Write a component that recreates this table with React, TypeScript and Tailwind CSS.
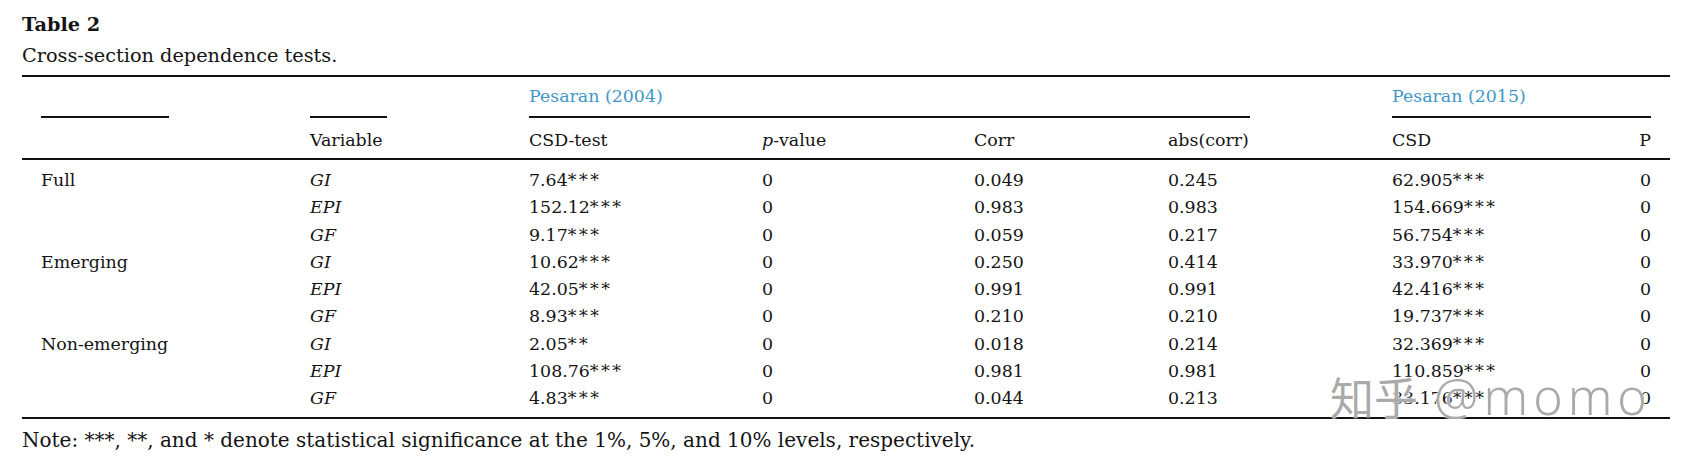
import React from "react";

type Row = { group?: string; v: string; csd: string; p: string; corr: string; abs: string; csd2: string; p2: string };

const rows: Row[] = [
  { group: "Full", v: "GI", csd: "7.64***", p: "0", corr: "0.049", abs: "0.245", csd2: "62.905***", p2: "0" },
  { v: "EPI", csd: "152.12***", p: "0", corr: "0.983", abs: "0.983", csd2: "154.669***", p2: "0" },
  { v: "GF", csd: "9.17***", p: "0", corr: "0.059", abs: "0.217", csd2: "56.754***", p2: "0" },
  { group: "Emerging", v: "GI", csd: "10.62***", p: "0", corr: "0.250", abs: "0.414", csd2: "33.970***", p2: "0" },
  { v: "EPI", csd: "42.05***", p: "0", corr: "0.991", abs: "0.991", csd2: "42.416***", p2: "0" },
  { v: "GF", csd: "8.93***", p: "0", corr: "0.210", abs: "0.210", csd2: "19.737***", p2: "0" },
  { group: "Non-emerging", v: "GI", csd: "2.05**", p: "0", corr: "0.018", abs: "0.214", csd2: "32.369***", p2: "0" },
  { v: "EPI", csd: "108.76***", p: "0", corr: "0.981", abs: "0.981", csd2: "110.859***", p2: "0" },
  { v: "GF", csd: "4.83***", p: "0", corr: "0.044", abs: "0.213", csd2: "33.176***", p2: "0" },
];

function Num({ s }: { s: string }) {
  const m = s.match(/^([^*]*)(\**)$/);
  const base = m ? m[1] : s;
  const stars = m ? m[2] : "";
  return (
    <span>
      {base}
      {stars && <span className="tracking-[2.5px]">{stars}</span>}
    </span>
  );
}

const grid =
  "grid grid-cols-[269px_219px_233px_212px_194px_101px_123px_227px_70px]";

export default function App() {
  return (
    <div
      className="relative w-[1691px] h-[471px] bg-white text-[#141414] overflow-hidden"
      style={{ fontFamily: '"DejaVu Serif", "Liberation Serif", serif' }}
    >
      <div className="pt-[10px] pl-[22px] w-[1670px]">
        <div className="text-[19.3px] leading-[30.7px]">
          <div className="font-bold">Table 2</div>
          <div>Cross-section dependence tests.</div>
        </div>
        <div className="mt-[4px] h-[2px] bg-[#111]" />

        <div className="text-[17.4px] leading-[24px]">
          {/* spanner headings */}
          <div className={`${grid} pt-[7px]`}>
            <div />
            <div />
            <div className="col-span-4 pl-[19px] text-[#3f97c8]">Pesaran (2004)</div>
            <div />
            <div className="col-span-2 pl-[19px] text-[#3f97c8]">Pesaran (2015)</div>
          </div>
          {/* spanner rules */}
          <div className={`${grid} mt-[7.5px]`}>
            <div className="pl-[19px]">
              <div className="w-[128px] h-[2px] bg-[#111]" />
            </div>
            <div className="pl-[19px]">
              <div className="w-[77px] h-[2px] bg-[#111]" />
            </div>
            <div className="col-span-4 pl-[19px]">
              <div className="h-[2px] bg-[#111]" />
            </div>
            <div />
            <div className="col-span-2 px-[19px]">
              <div className="h-[2px] bg-[#111]" />
            </div>
          </div>
          {/* column headings */}
          <div className={`${grid} pt-[10px]`}>
            <div />
            <div className="pl-[19px]">Variable</div>
            <div className="pl-[19px]">CSD-test</div>
            <div className="pl-[19px]">
              <i>p</i>-value
            </div>
            <div className="pl-[19px]">Corr</div>
            <div className="pl-[19px] whitespace-nowrap">abs(corr)</div>
            <div />
            <div className="pl-[19px]">CSD</div>
            <div className="pr-[19px] text-right">P</div>
          </div>
          <div className="mt-[6px] h-[2px] bg-[#111]" />

          {/* body */}
          <div className="pt-[7px] leading-[27.3px]">
            {rows.map((r, i) => (
              <div key={i} className={grid}>
                <div className="pl-[19px]">{r.group ?? ""}</div>
                <div className="pl-[19px] italic">{r.v}</div>
                <div className="pl-[19px]">
                  <Num s={r.csd} />
                </div>
                <div className="pl-[19px]">{r.p}</div>
                <div className="pl-[19px]">{r.corr}</div>
                <div className="pl-[19px]">{r.abs}</div>
                <div />
                <div className="pl-[19px] whitespace-nowrap">
                  <Num s={r.csd2} />
                </div>
                <div className="pr-[19px] text-right">{r.p2}</div>
              </div>
            ))}
          </div>
          <div className="mt-[4px] h-[2px] bg-[#111]" />
          <div className="mt-[8px] text-[20px] leading-[26px]">
            Note: ***, **, and * denote statistical significance at the 1%, 5%, and 10% levels, respectively.
          </div>
        </div>
      </div>

      {/* watermark */}
      <div
        className="absolute left-[1330px] top-[371px] flex items-center gap-[16px] text-[rgba(155,155,155,0.85)] leading-none"
        style={{ textShadow: "0 0 2px #fff, 0 0 2px #fff" }}
      >
        <span
          className="text-[44px]"
          style={{ fontFamily: '"Noto Sans CJK SC", sans-serif' }}
        >
          知乎
        </span>
        <span
          className="text-[50px] font-light tracking-[5px]"
          style={{ fontFamily: '"Noto Sans", sans-serif' }}
        >
          @momo
        </span>
      </div>
    </div>
  );
}
